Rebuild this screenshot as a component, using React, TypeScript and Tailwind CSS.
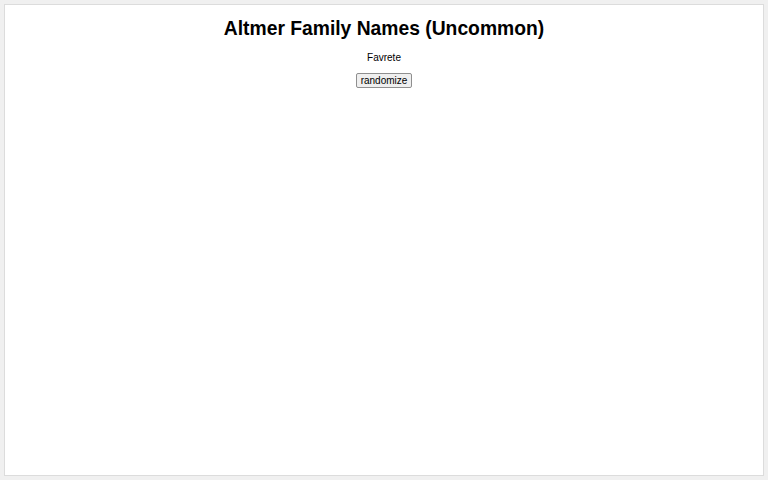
import { useState } from "react";

const names = ["Favrete", "Aldmeri", "Calanwe", "Vanyarel", "Silnaril"];

export default function App() {
  const [name, setName] = useState(names[0]);

  const randomize = () => {
    setName(names[Math.floor(Math.random() * names.length)]);
  };

  return (
    <div className="h-[480px] bg-[#f0f0f0] p-[4px] font-['Liberation_Sans',Arial,sans-serif]">
      <div className="flex h-full flex-col items-center border border-[#dcdcdc] bg-white">
        <h1 className="mt-[13px] text-[19.3px] leading-[22px] font-bold text-black">
          Altmer Family Names (Uncommon)
        </h1>
        <p className="mt-[12px] text-[10px] leading-[12px] text-black">{name}</p>
        <button
          onClick={randomize}
          className="mt-[9px] h-[15px] rounded-[2px] border border-[#8f8f8f] bg-[#efefef] px-[4px] text-[10px] leading-[12px] text-black"
        >
          randomize
        </button>
      </div>
    </div>
  );
}
